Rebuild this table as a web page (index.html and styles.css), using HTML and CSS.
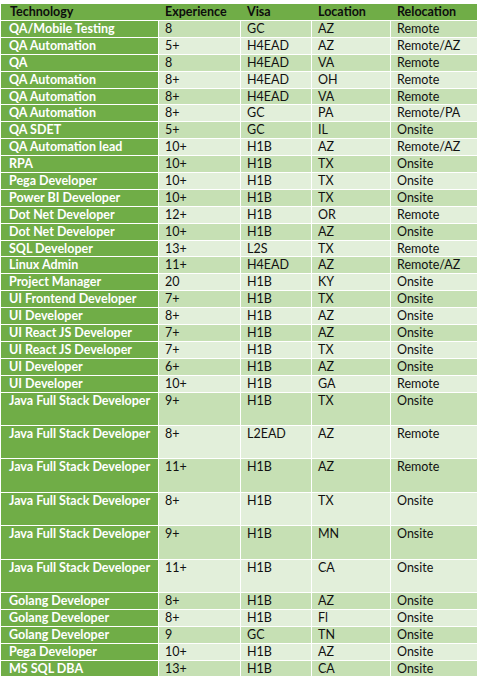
FILE: index.html
```html
<!DOCTYPE html>
<html lang="en">
<head>
<meta charset="utf-8">
<title>Candidates</title>
<link rel="stylesheet" href="styles.css">
</head>
<body>
<div class="sheet">
  <div class="head">
    <div class="c tech">Technology</div>
    <div class="c">Experience</div>
    <div class="c">Visa</div>
    <div class="c">Location</div>
    <div class="c">Relocation</div>
  </div>
  <div class="body">
    <div class="row odd"><div class="c tech">QA/Mobile Testing</div><div class="c">8</div><div class="c">GC</div><div class="c">AZ</div><div class="c">Remote</div></div>
    <div class="row even"><div class="c tech">QA Automation</div><div class="c">5+</div><div class="c">H4EAD</div><div class="c">AZ</div><div class="c">Remote/AZ</div></div>
    <div class="row odd"><div class="c tech">QA</div><div class="c">8</div><div class="c">H4EAD</div><div class="c">VA</div><div class="c">Remote</div></div>
    <div class="row even"><div class="c tech">QA Automation</div><div class="c">8+</div><div class="c">H4EAD</div><div class="c">OH</div><div class="c">Remote</div></div>
    <div class="row odd"><div class="c tech">QA Automation</div><div class="c">8+</div><div class="c">H4EAD</div><div class="c">VA</div><div class="c">Remote</div></div>
    <div class="row even"><div class="c tech">QA Automation</div><div class="c">8+</div><div class="c">GC</div><div class="c">PA</div><div class="c">Remote/PA</div></div>
    <div class="row odd"><div class="c tech">QA SDET</div><div class="c">5+</div><div class="c">GC</div><div class="c">IL</div><div class="c">Onsite</div></div>
    <div class="row even"><div class="c tech">QA Automation lead</div><div class="c">10+</div><div class="c">H1B</div><div class="c">AZ</div><div class="c">Remote/AZ</div></div>
    <div class="row odd"><div class="c tech">RPA</div><div class="c">10+</div><div class="c">H1B</div><div class="c">TX</div><div class="c">Onsite</div></div>
    <div class="row even"><div class="c tech">Pega Developer</div><div class="c">10+</div><div class="c">H1B</div><div class="c">TX</div><div class="c">Onsite</div></div>
    <div class="row odd"><div class="c tech">Power BI Developer</div><div class="c">10+</div><div class="c">H1B</div><div class="c">TX</div><div class="c">Onsite</div></div>
    <div class="row even"><div class="c tech">Dot Net Developer</div><div class="c">12+</div><div class="c">H1B</div><div class="c">OR</div><div class="c">Remote</div></div>
    <div class="row odd"><div class="c tech">Dot Net Developer</div><div class="c">10+</div><div class="c">H1B</div><div class="c">AZ</div><div class="c">Onsite</div></div>
    <div class="row even"><div class="c tech">SQL Developer</div><div class="c">13+</div><div class="c">L2S</div><div class="c">TX</div><div class="c">Remote</div></div>
    <div class="row odd"><div class="c tech">Linux Admin</div><div class="c">11+</div><div class="c">H4EAD</div><div class="c">AZ</div><div class="c">Remote/AZ</div></div>
    <div class="row even"><div class="c tech">Project Manager</div><div class="c">20</div><div class="c">H1B</div><div class="c">KY</div><div class="c">Onsite</div></div>
    <div class="row odd"><div class="c tech">UI Frontend Developer</div><div class="c">7+</div><div class="c">H1B</div><div class="c">TX</div><div class="c">Onsite</div></div>
    <div class="row even"><div class="c tech">UI Developer</div><div class="c">8+</div><div class="c">H1B</div><div class="c">AZ</div><div class="c">Onsite</div></div>
    <div class="row odd"><div class="c tech">UI React JS Developer</div><div class="c">7+</div><div class="c">H1B</div><div class="c">AZ</div><div class="c">Onsite</div></div>
    <div class="row even"><div class="c tech">UI React JS Developer</div><div class="c">7+</div><div class="c">H1B</div><div class="c">TX</div><div class="c">Onsite</div></div>
    <div class="row odd"><div class="c tech">UI Developer</div><div class="c">6+</div><div class="c">H1B</div><div class="c">AZ</div><div class="c">Onsite</div></div>
    <div class="row even"><div class="c tech">UI Developer</div><div class="c">10+</div><div class="c">H1B</div><div class="c">GA</div><div class="c">Remote</div></div>
    <div class="row odd tall"><div class="c tech">Java Full Stack Developer</div><div class="c">9+</div><div class="c">H1B</div><div class="c">TX</div><div class="c">Onsite</div></div>
    <div class="row even tall"><div class="c tech">Java Full Stack Developer</div><div class="c">8+</div><div class="c">L2EAD</div><div class="c">AZ</div><div class="c">Remote</div></div>
    <div class="row odd tall"><div class="c tech">Java Full Stack Developer</div><div class="c">11+</div><div class="c">H1B</div><div class="c">AZ</div><div class="c">Remote</div></div>
    <div class="row even tall"><div class="c tech">Java Full Stack Developer</div><div class="c">8+</div><div class="c">H1B</div><div class="c">TX</div><div class="c">Onsite</div></div>
    <div class="row odd tall"><div class="c tech">Java Full Stack Developer</div><div class="c">9+</div><div class="c">H1B</div><div class="c">MN</div><div class="c">Onsite</div></div>
    <div class="row even tall"><div class="c tech">Java Full Stack Developer</div><div class="c">11+</div><div class="c">H1B</div><div class="c">CA</div><div class="c">Onsite</div></div>
    <div class="row odd"><div class="c tech">Golang Developer</div><div class="c">8+</div><div class="c">H1B</div><div class="c">AZ</div><div class="c">Onsite</div></div>
    <div class="row even"><div class="c tech">Golang Developer</div><div class="c">8+</div><div class="c">H1B</div><div class="c">Fl</div><div class="c">Onsite</div></div>
    <div class="row odd"><div class="c tech">Golang Developer</div><div class="c">9</div><div class="c">GC</div><div class="c">TN</div><div class="c">Onsite</div></div>
    <div class="row even"><div class="c tech">Pega Developer</div><div class="c">10+</div><div class="c">H1B</div><div class="c">AZ</div><div class="c">Onsite</div></div>
    <div class="row odd"><div class="c tech">MS SQL DBA</div><div class="c">13+</div><div class="c">H1B</div><div class="c">CA</div><div class="c">Onsite</div></div>
  </div>
</div>
</body>
</html>
```

FILE: styles.css
```css
html, body {
  margin: 0;
  padding: 0;
  background: #ffffff;
}

body {
  font-family: Lato, "Open Sans", sans-serif;
  font-size: 12.5px;
  color: #111111;
  overflow: hidden;
}

.sheet {
  width: 476px;
  margin: 4px 0 0 1px;
}

.head,
.row {
  display: grid;
  grid-template-columns: 157px 81px 70px 78px 86px;
  column-gap: 1px;
}

.head {
  height: 16px;
  background: #70ad47;
  font-weight: bold;
  color: #0d0d0d;
  margin-bottom: 1px;
}

.head .tech {
  padding-left: 9px;
}

.body {
  display: flex;
  flex-direction: column;
  gap: 1px;
}

.row {
  height: 15.9px;
}

.row.tall {
  height: 32.4px;
}

.c {
  line-height: 16px;
  padding-left: 6px;
  white-space: nowrap;
  overflow: hidden;
}

.row.odd .c {
  background: #c6e0b4;
}

.row.even .c {
  background: #e2efda;
}

.row .c.tech {
  background: #70ad47;
  color: #ffffff;
  font-weight: bold;
  padding-left: 8px;
}
```
